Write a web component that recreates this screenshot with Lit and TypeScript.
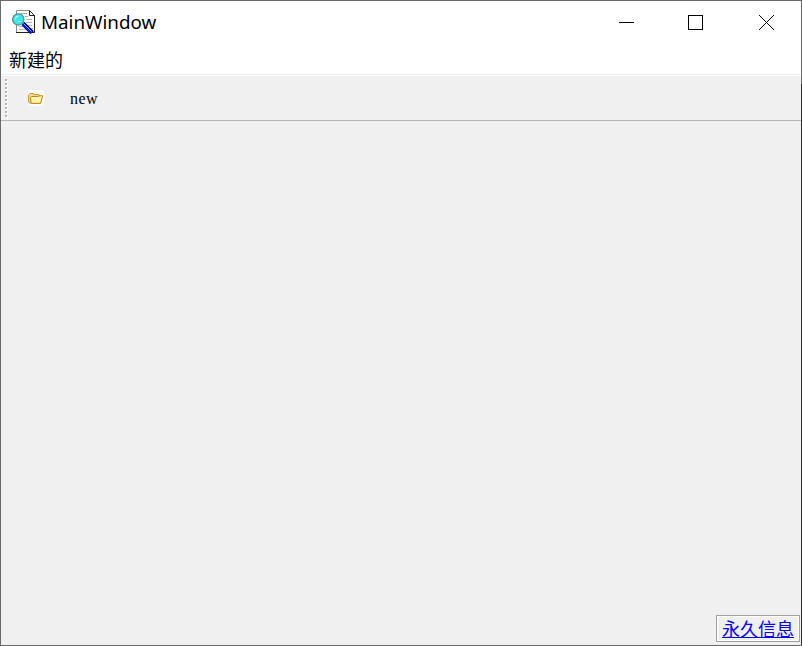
import { LitElement, html, css, svg } from "lit";
import { customElement } from "lit/decorators.js";

@customElement("document-search-icon")
class DocumentSearchIcon extends LitElement {
  static styles = css`
    :host { display: block; width: 24px; height: 24px; margin-bottom: 1px; }
    svg { display: block; }
  `;
  render() {
    return html`<svg width="24" height="24" viewBox="0 0 24 24">
      <path d="M4.5 0.5H17.5L22.5 5.5V22.5H4.5Z" fill="#fff" stroke="#8c8c8c"/>
      <path d="M22.5 5V22.5H4" fill="none" stroke="#222"/>
      <path d="M17.5 0.5V5.5H22.5Z" fill="#fff" stroke="#222"/>
      <path d="M8 3.5H15M13 6.5H16M14 9.5H20M14 12.5H20M7 16.5H11M16 15.5H20M7 19.5H14M19 18.5H21" stroke="#b4b4b4" fill="none"/>
      <path d="M11 13.5L20 22.5" stroke="#0000b0" stroke-width="4.4"/>
      <path d="M12.5 12.5L21.5 21.5" stroke="#000" stroke-width="1"/>
      <path d="M11 14.5L19.5 23" stroke="#0010ff" stroke-width="2.6"/>
      <path d="M11.5 13.5L19.5 21.5" stroke="#54c8f8" stroke-width="1"/>
      <circle cx="6.3" cy="9.4" r="5.7" fill="#3ce6ea" stroke="#45878c" stroke-width="1.1"/>
      <path d="M3.2 9.8C3.2 7.5 4.5 6.2 6.8 6M6 11.5H9" fill="none" stroke="#b4ffff" stroke-width="1.2"/>
    </svg>`;
  }
}

@customElement("folder-icon")
class FolderIcon extends LitElement {
  static styles = css`
    :host { display: block; width: 16px; height: 16px; background: #fbfbfb; }
    svg { display: block; }
  `;
  render() {
    return html`<svg width="16" height="16" viewBox="0 0 16 16">
      <path d="M0.6 12V5L2.2 3.5H5L6.2 4.6H10.8L12.2 6V13H2Z" fill="#f9dd84" stroke="#c8952e"/>
      <path d="M3.2 13.4L2.4 7.6L3.6 6.5H10L11 5.8H14.8L12.6 13.4Z" fill="#fff29c" stroke="#bc8220"/>
      <path d="M4 7.6H12.6" stroke="#fffbd0"/>
    </svg>`;
  }
}

@customElement("app-root")
class AppRoot extends LitElement {
  static styles = css`
    :host {
      display: flex; flex-direction: column; box-sizing: border-box; position: relative;
      width: 802px; height: 646px; overflow: hidden;
      border: 1px solid #696969; border-right: none; padding-right: 1px;
      background: #f0f0f0; color: #000;
      font-family: "Noto Sans", "Noto Sans CJK SC", sans-serif;
    }
    .edge { position: absolute; top: 0; right: 0; bottom: 0; width: 1px;
      background: linear-gradient(#696969 83px, #2a2a2a 83px); }
    .title-bar { display: flex; align-items: center; height: 43px; padding-left: 11px; background: #fff; flex: none; }
    .title { margin-left: 5px; font-size: 18.8px; line-height: 43px; height: 43px; white-space: nowrap; flex: 1; }
    .controls { display: flex; }
    .control { width: 70px; height: 43px; display: block; }
    .menu-bar { display: flex; height: 32px; box-sizing: border-box; padding-left: 8px; background: #fff; flex: none;
      border-bottom: 1px solid #fff; box-shadow: inset 0 -1px #f0f0f0; }
    .menu { font: 18px/31px "Noto Sans CJK SC", sans-serif; }
    .tool-bar { display: flex; align-items: center; height: 45px; box-sizing: border-box; border-bottom: 1px solid #b4b4b4; flex: none; padding-left: 4px; }
    .grip { display: block; flex: none; }
    .tool-bar folder-icon { margin-left: 20px; }
    .action { margin-left: 26px; font: 16px/44px "Liberation Serif", serif; letter-spacing: 0.5px; padding-top: 1px; height: 44px; box-sizing: border-box; }
    .workspace { flex: 1; }
    .status-bar { display: flex; justify-content: flex-end; flex: none; height: 30px; padding-right: 1px; }
    .permanent { box-sizing: border-box; width: 84px; height: 27px; border: 1px solid #a0a0a0; box-shadow: inset 0 0 0 1px #fff;
      padding-left: 5px; font: 18px/26px "Noto Sans CJK SC", sans-serif; color: #00f; white-space: nowrap; }
    .link { display: inline-block; height: 22px; line-height: 25px; border-bottom: 1px solid #00f; box-sizing: border-box; vertical-align: top; }
  `;
  render() {
    const dots = Array.from({ length: 10 }, (_, i) => i * 4 + 1);
    return html`
      <div class="title-bar">
        <document-search-icon></document-search-icon>
        <span class="title">MainWindow</span>
        <div class="controls">
          <svg class="control" viewBox="0 0 70 43"><path d="M28 21.5H43" stroke="#000"/></svg>
          <svg class="control" viewBox="0 0 70 43"><rect x="27.5" y="14.5" width="14" height="14" fill="none" stroke="#000"/></svg>
          <svg class="control" viewBox="0 0 70 43"><path d="M28 14L43 29M43 14L28 29" stroke="#000"/></svg>
        </div>
      </div>
      <div class="menu-bar"><span class="menu">新建的</span></div>
      <div class="tool-bar">
        <svg class="grip" width="3" height="41" viewBox="0 0 3 41">
          ${dots.map((y) => svg`<rect x="1" y=${y + 1} width="2" height="2" fill="#fff"/><rect x="0" y=${y} width="2" height="2" fill="#b4b4b4"/>`)}
        </svg>
        <folder-icon></folder-icon>
        <span class="action">new</span>
      </div>
      <div class="workspace"></div>
      <div class="status-bar"><div class="permanent"><span class="link">永久信息</span></div></div>
      <div class="edge"></div>
    `;
  }
}
